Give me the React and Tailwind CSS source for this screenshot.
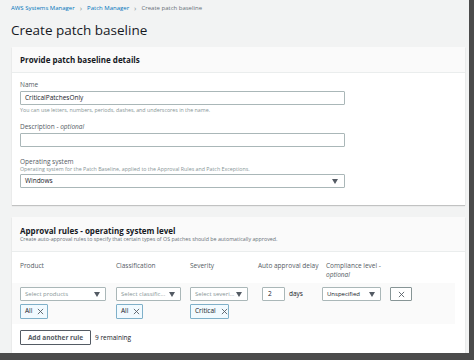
import React from "react";

const font = { fontFamily: '"Open Sans", "Noto Sans", Arial, sans-serif' };

function Caret() {
  return (
    <svg width="6" height="5" viewBox="0 0 6 5" className="shrink-0">
      <path d="M0 0h6L3 5z" fill="#545b64" />
    </svg>
  );
}

function Cross({ size = 7 }) {
  return (
    <svg width={size} height={size} viewBox="0 0 8 8" className="shrink-0">
      <path d="M1 1l6 6M7 1L1 7" stroke="#545b64" strokeWidth="1" fill="none" />
    </svg>
  );
}

function Select({ text, placeholder, className }) {
  return (
    <div
      className={`h-[14px] bg-white border border-[#aab7b8] rounded-[1px] flex items-center justify-between pl-[4px] pr-[5px] ${className}`}
    >
      <span className={`text-[6px] leading-none whitespace-nowrap ${placeholder ? "text-[#879596]" : "text-[#16191f]"}`}>
        {text}
      </span>
      <Caret />
    </div>
  );
}

function Token({ text, className = "" }) {
  return (
    <div
      className={`h-[15px] flex items-center gap-[5px] px-[4px] bg-[#f1faff] border border-[#7fb0c9] rounded-[1px] ${className}`}
    >
      <span className="text-[6.5px] leading-none text-[#16191f]">{text}</span>
      <Cross size={7} />
    </div>
  );
}

export default function App() {
  return (
    <div className="w-[474px] h-[360px] bg-[#4b4b4b] overflow-hidden" style={font}>
      <div className="w-[469px] h-[353px] bg-[#f2f3f3] overflow-hidden pl-[11px] pt-[3px]">
        {/* breadcrumb */}
        <div className="flex items-center gap-[5px] text-[6px] h-[10px]">
          <span className="text-[#0073bb]">AWS Systems Manager</span>
          <span className="text-[#879596] text-[8px] leading-none">›</span>
          <span className="text-[#0073bb]">Patch Manager</span>
          <span className="text-[#879596] text-[8px] leading-none">›</span>
          <span className="text-[#687078]">Create patch baseline</span>
        </div>

        <h1 className="mt-[8px] text-[13.5px] leading-[18px] text-[#16191f]">Create patch baseline</h1>

        {/* card 1 */}
        <div className="mt-[8px] ml-[1px] w-[453px] bg-white shadow-[0_1px_1px_rgba(0,0,0,0.2)]">
          <div className="h-[26px] bg-[#fafafa] border-b border-[#eaeded] flex items-center px-[8px]">
            <span className="text-[8px] font-bold text-[#16191f]">Provide patch baseline details</span>
          </div>
          <div className="px-[8px] pt-[7px] pb-[17px]">
            <div className="text-[6.5px] leading-[9px] text-[#545b64]">Name</div>
            <div className="mt-[2px] w-[325px] h-[14px] border border-[#aab7b8] rounded-[1px] flex items-center pl-[4px]">
              <span className="text-[6.5px] leading-none text-[#16191f]">CriticalPatchesOnly</span>
            </div>
            <div className="mt-[2px] text-[5.3px] leading-[7px] text-[#879596]">
              You can use letters, numbers, periods, dashes, and underscores in the name.
            </div>

            <div className="mt-[8px] text-[6.5px] leading-[9px] text-[#545b64]">
              Description - <i>optional</i>
            </div>
            <div className="mt-[2px] w-[325px] h-[14px] border border-[#aab7b8] rounded-[1px]" />

            <div className="mt-[10px] text-[6.5px] leading-[9px] text-[#545b64]">Operating system</div>
            <div className="text-[5.3px] leading-[7px] text-[#879596]">
              Operating system for the Patch Baseline, applied to the Approval Rules and Patch Exceptions.
            </div>
            <div className="mt-[1px] w-[325px] h-[14px] border border-[#aab7b8] rounded-[1px] flex items-center justify-between pl-[4px] pr-[6px]">
              <span className="text-[6.5px] leading-none text-[#16191f]">Windows</span>
              <Caret />
            </div>
          </div>
        </div>

        {/* card 2 */}
        <div className="mt-[12px] ml-[1px] w-[453px] bg-white shadow-[0_1px_1px_rgba(0,0,0,0.2)]">
          <div className="h-[35px] bg-[#fafafa] border-b border-[#eaeded] flex flex-col justify-center px-[8px]">
            <span className="text-[8px] leading-[11px] font-bold text-[#16191f]">
              Approval rules - operating system level
            </span>
            <span className="text-[5.3px] leading-[7px] text-[#687078]">
              Create auto-approval rules to specify that certain types of OS patches should be automatically approved.
            </span>
          </div>

          <div className="flex px-[8px] pt-[9px] h-[31px] text-[6.5px] leading-[9px] text-[#545b64]">
            <div className="w-[96px]">Product</div>
            <div className="w-[74px]">Classification</div>
            <div className="w-[68px]">Severity</div>
            <div className="w-[68px]">Auto approval delay</div>
            <div className="w-[70px]">
              Compliance level -<br />
              <i>optional</i>
            </div>
          </div>

          <div className="w-[443px] bg-[#fafafa] px-[8px] pt-[4px] pb-[5px]">
            <div className="flex items-center">
              <Select text="Select products" placeholder className="w-[86px] mr-[10px]" />
              <Select text="Select classific..." placeholder className="w-[65px] mr-[9px]" />
              <Select text="Select severi..." placeholder className="w-[58px] mr-[14px]" />
              <div className="w-[23px] h-[14px] bg-white border border-[#aab7b8] rounded-[1px] flex items-center pl-[5px] mr-[4px]">
                <span className="text-[6.5px] leading-none text-[#16191f]">2</span>
              </div>
              <span className="text-[6.5px] text-[#16191f] w-[33px]">days</span>
              <Select text="Unspecified" className="w-[59px] mr-[9px]" />
              <div className="w-[22px] h-[14px] bg-white border border-[#879596] rounded-[1px] flex items-center justify-center">
                <Cross size={7} />
              </div>
            </div>
            <div className="flex mt-[3px]">
              <Token text="All" className="w-[28px] mr-[68px]" />
              <Token text="All" className="w-[27px] mr-[47px]" />
              <Token text="Critical" className="w-[39px]" />
            </div>
          </div>

          <div className="flex items-center px-[8px] pt-[6px] pb-[10px]">
            <div className="h-[15px] w-[71px] border border-[#545b64] rounded-[1px] flex items-center justify-center bg-white">
              <span className="text-[6.5px] font-bold text-[#545b64]">Add another rule</span>
            </div>
            <span className="ml-[4px] text-[6.5px] text-[#16191f]">9 remaining</span>
          </div>
        </div>
      </div>
    </div>
  );
}
